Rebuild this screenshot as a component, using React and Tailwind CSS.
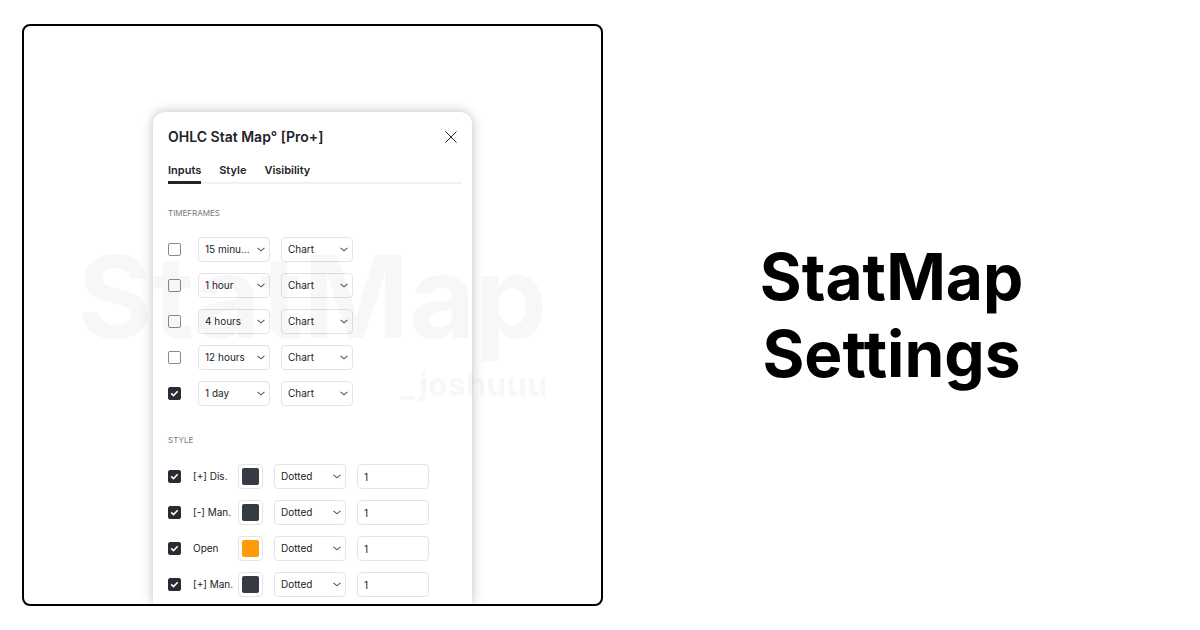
import { useState } from "react"

const tabs = ["Inputs", "Style", "Visibility"]

const timeframes = [
  { name: "15 minu...", enabled: false },
  { name: "1 hour", enabled: false },
  { name: "4 hours", enabled: false },
  { name: "12 hours", enabled: false },
  { name: "1 day", enabled: true },
]

const styleRows = [
  { name: "[+] Dis.", color: "bg-[#363a42]" },
  { name: "[-] Man.", color: "bg-[#363a42]" },
  { name: "Open", color: "bg-[#ff9b0b]" },
  { name: "[+] Man.", color: "bg-[#363a42]" },
]

const Checkbox = ({ id, label, defaultChecked }) => (
  <span className="relative flex shrink-0">
    <input
      id={id}
      type="checkbox"
      aria-label={label}
      defaultChecked={defaultChecked}
      className="peer size-[13px] appearance-none rounded-xs border border-[#8a8a8e] bg-white checked:border-[#2a2b33] checked:bg-[#2a2b33]"
    />
    <svg
      viewBox="0 0 13 13"
      className="pointer-events-none absolute inset-0 hidden size-[13px] peer-checked:block"
      fill="none"
      stroke="white"
      strokeWidth="1.6"
    >
      <path d="M3.2 6.4l2.3 2.2 4.2-4.3" />
    </svg>
  </span>
)

const Select = ({ label, value }) => (
  <span className="relative flex">
    <select
      aria-label={label}
      className="h-[25px] w-[72px] appearance-none rounded-sm border border-[#e4e4e6] bg-white pl-1.5 text-[10px] text-[#222228]"
    >
      <option>{value}</option>
    </select>
    <svg
      viewBox="0 0 8 5"
      className="pointer-events-none absolute top-2.5 right-[5px] h-[5px] w-2"
      fill="none"
      stroke="#55555b"
      strokeWidth="1.1"
    >
      <path d="M0.5 0.8L4 3.8L7.5 0.8" />
    </svg>
  </span>
)

const SettingsPanel = () => {
  const [activeTab, setActiveTab] = useState("Inputs")

  return (
    <div className="mx-auto w-[319px] max-w-full flex-1 rounded-t-xl bg-white px-[15px] pt-[13px] pb-[7px] text-[#222228] shadow-[0_0_12px_rgba(0,0,0,0.25)]">
      <div className="flex h-6 items-center justify-between">
        <h2 className="text-sm font-semibold">OHLC Stat Map° [Pro+]</h2>
        <button aria-label="Close">
          <svg viewBox="0 0 12 12" className="size-3" fill="none" stroke="#222228">
            <path d="M0.5 0.5l11 11M11.5 0.5l-11 11" />
          </svg>
        </button>
      </div>

      <div className="mt-[13px] mr-[-5px] flex gap-[18px] bg-[linear-gradient(#f2f2f3,#f2f2f3)] bg-[length:100%_2px] bg-bottom bg-no-repeat">
        {tabs.map((tab) => (
          <button
            key={tab}
            onClick={() => setActiveTab(tab)}
            className={`border-b-3 pb-[3px] text-[11px] leading-4 font-semibold ${
              activeTab === tab ? "border-[#222228]" : "border-transparent"
            }`}
          >
            {tab}
          </button>
        ))}
      </div>

      <h3 className="mt-[21px] text-[8px] leading-4 text-[#77777b]">TIMEFRAMES</h3>
      <div className="mt-4 flex flex-col gap-[11px]">
        {timeframes.map((row) => (
          <div key={row.name} className="flex items-center">
            <Checkbox label={row.name} defaultChecked={row.enabled} />
            <div className="ml-[17px] flex gap-[11px]">
              <Select label="Timeframe" value={row.name} />
              <Select label="Source" value="Chart" />
            </div>
          </div>
        ))}
      </div>

      <h3 className="mt-[26px] text-[8px] leading-4 text-[#77777b]">STYLE</h3>
      <div className="mt-4 flex flex-col gap-[11px]">
        {styleRows.map((row, i) => (
          <div key={i} className="flex items-center">
            <Checkbox id={`line-${i}`} defaultChecked />
            <label htmlFor={`line-${i}`} className="w-[57px] pl-3 text-[10px]">
              {row.name}
            </label>
            <div className="flex gap-[11px]">
              <button
                aria-label={`${row.name} color`}
                className="size-[25px] rounded-sm border border-[#e4e4e6] p-[3px]"
              >
                <span className={`block size-full rounded-xs ${row.color}`}></span>
              </button>
              <Select label="Line style" value="Dotted" />
              <input
                type="text"
                aria-label="Line width"
                defaultValue="1"
                className="h-[25px] w-[72px] rounded-sm border border-[#e4e4e6] px-1.5 text-[10px]"
              />
            </div>
          </div>
        ))}
      </div>
    </div>
  )
}

const App = () => {
  return (
    <main className="flex min-h-screen bg-white pt-6 pr-4 pb-[25px] pl-[22px] font-['Inter',sans-serif]">
      <section className="relative flex w-1/2 flex-col overflow-hidden rounded-lg border-2 border-black pt-[86px]">
        <SettingsPanel />
        {/* watermark */}
        <div className="pointer-events-none absolute inset-0 flex flex-col items-center justify-center text-black/3">
          <div className="pt-1 text-right">
            <p className="text-[114px] leading-[136px] font-bold">StatMap</p>
            <p className="text-[32px] leading-10 font-extrabold">_joshuuu</p>
          </div>
        </div>
      </section>

      <section className="flex w-1/2 items-center justify-center pr-1">
        <h1 className="w-min text-center text-[64px] leading-[77px] font-bold text-black">
          StatMap Settings
        </h1>
      </section>
    </main>
  )
}

export default App
